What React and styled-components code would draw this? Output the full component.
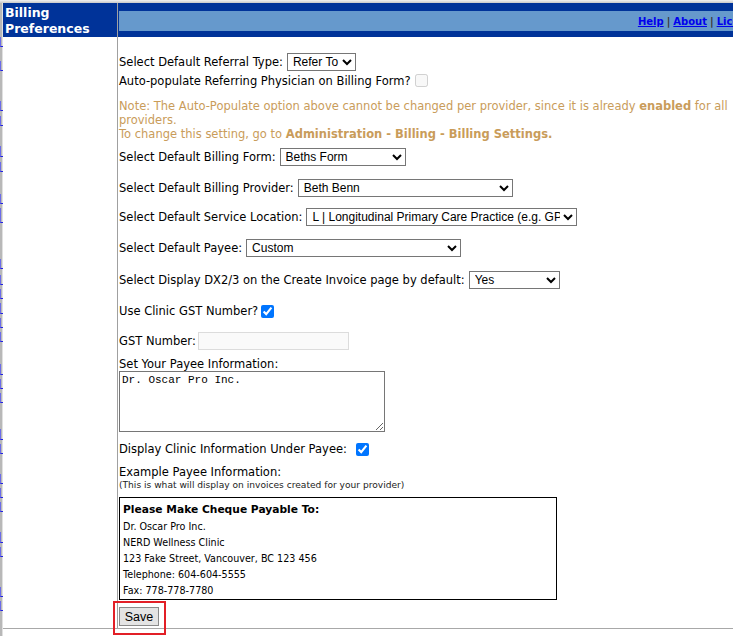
import React from 'react';
import styled, { createGlobalStyle } from 'styled-components';

const GlobalStyle = createGlobalStyle`
  html, body {
    margin: 0;
    padding: 0;
    overflow: hidden;
    background: #fff;
    font-family: "DejaVu Sans", Verdana, sans-serif;
    color: #000;
  }
`;

const Page = styled.div`
  width: 762px;
  height: 636px;
  display: flex;
  flex-direction: column;
`;

const TopEdge = styled.div`
  height: 3px;
  background: linear-gradient(#f2f2f2, #c8c8c8);
`;

const Body = styled.div`
  flex: 1;
  display: flex;
  align-items: flex-start;
`;

/* cut-off edge of the neighbouring menu frame */
const SideFrame = styled.div`
  flex-shrink: 0;
  width: 3px;
  height: 633px;
  overflow: hidden;
  background: linear-gradient(90deg, #b8b8b8 0 2px, #e0e0e0 2px);
  display: flex;
  flex-direction: column;
  align-items: flex-end;
  padding-top: 30px;
  box-sizing: border-box;
`;

const SideMark = styled.span`
  display: block;
  width: 2px;
  height: ${p => p.$h || 9}px;
  margin-top: ${p => p.$gap || 5}px;
  border-bottom: 1px solid #2323e0;
  border-left: 1px solid #6b6bea;
`;

const Frame = styled.div`
  flex: 1;
  min-width: 0;
  display: grid;
  grid-template-columns: 115px 1fr;
  border-bottom: 1px solid #a8a8a8;
`;

const TitleCell = styled.div`
  background: #003399;
  color: #fff;
  font-weight: bold;
  font-size: 12.5px;
  line-height: 16px;
  padding: 2px 0 0 2px;
  height: 34px;
  box-sizing: border-box;
  border-right: 1px solid #a0a0a0;
`;

const BarCell = styled.div`
  background: #003399;
  height: 34px;
  padding: 8px 0 6px 1px;
  box-sizing: border-box;
`;

const HelpBar = styled.div`
  background: #6699cc;
  height: 20px;
  display: flex;
  align-items: center;
  justify-content: flex-end;
  padding-right: 3px;
  font-size: 10px;
  font-weight: bold;
  white-space: nowrap;
`;

const HelpLink = styled.a`
  color: #0000ee;
  text-decoration: underline;
`;

const Pipe = styled.span`
  color: #333;
  margin: 0 3px;
`;

const SideCell = styled.div`
  border-right: 1px solid #a0a0a0;
`;

const Content = styled.div`
  padding: 15px 0 2px 1px;
  font-size: 11.5px;
  display: flex;
  flex-direction: column;
  align-items: flex-start;
  white-space: nowrap;
`;

const Field = styled.div`
  display: flex;
  align-items: center;
  height: ${p => p.$h || 20}px;
  margin-top: ${p => p.$mt || 0}px;
`;

const Select = styled.select`
  width: ${p => (p.$w ? `${p.$w}px` : 'auto')};
  height: 18px;
  margin-left: 4px;
  border: 1px solid #767676;
  border-radius: 0;
  background: #fff;
  font-family: "Liberation Sans", Arial, sans-serif;
  font-size: 12px;
  color: #000;
  padding: 0 0 0 1px;
  box-sizing: border-box;
`;

const Check = styled.input.attrs({ type: 'checkbox' })`
  width: 13px;
  height: 13px;
  margin: 0 0 0 ${p => p.$ml || 3}px;
`;

const Note = styled.div`
  margin-top: 9px;
  color: #c99c5a;
  line-height: 14px;
`;

const GstInput = styled.input`
  width: 151px;
  height: 18px;
  margin: 0 0 0 2px;
  border: 1px solid #dcdcdc;
  background: #fafafa;
  box-sizing: border-box;
`;

const Caption = styled.div`
  margin-top: ${p => p.$mt || 0}px;
  line-height: ${p => p.$lh || 14}px;
  font-size: ${p => p.$fs || 11.5}px;
  color: ${p => p.$color || '#000'};
`;

const PayeeArea = styled.textarea`
  width: 266px;
  height: 61px;
  margin: 0;
  display: block;
  box-sizing: border-box;
  border: 1px solid #767676;
  padding: 2px 2px;
  font-family: "Liberation Mono", "Courier New", monospace;
  font-size: 11px;
  line-height: 13px;
  resize: both;
`;

const ExampleBox = styled.div`
  margin-top: 6px;
  width: 438px;
  height: 103px;
  box-sizing: border-box;
  border: 1px solid #000;
  padding: 3px 3px 0 3px;
`;

const ExampleTitle = styled.div`
  font-weight: bold;
  font-size: 10.7px;
  line-height: 18px;
`;

const ExampleLine = styled.div`
  font-size: 9.6px;
  line-height: 16px;
`;

const SaveWrap = styled.div`
  position: relative;
  margin-top: 7px;
`;

const SaveButton = styled.button`
  display: block;
  width: 40px;
  height: 19px;
  padding: 0;
  border: 1px solid #8a8a8a;
  border-radius: 0;
  background: #e4e4e4;
  font-family: "Liberation Sans", Arial, sans-serif;
  font-size: 12.5px;
  color: #000;
`;

const Highlight = styled.div`
  position: absolute;
  top: -6px;
  left: -6px;
  right: -7px;
  bottom: -9px;
  border: 2px solid #e21f26;
  pointer-events: none;
`;

const sideMarks = [
  [9, 4], [9, 14], [9, 30], [9, 5], [10, 20], [9, 5], [9, 22], [14, 4], [9, 36], [9, 6],
  [9, 4], [10, 4], [9, 4], [9, 4], [10, 22], [9, 4], [9, 4], [10, 26],
  [9, 4], [9, 20], [9, 4], [9, 4], [10, 20], [9, 4], [9, 30], [9, 4],
];

const App = () => (
  <Page>
    <GlobalStyle />
    <TopEdge />
    <Body>
      <SideFrame>
        {sideMarks.map(([h, gap], i) => (
          <SideMark key={i} $h={h} $gap={gap} />
        ))}
      </SideFrame>
      <Frame>
        <TitleCell>Billing<br />Preferences</TitleCell>
        <BarCell>
          <HelpBar>
            <HelpLink>Help </HelpLink><Pipe>|</Pipe>
            <HelpLink>About </HelpLink><Pipe>|</Pipe>
            <HelpLink>License</HelpLink>
          </HelpBar>
        </BarCell>
        <SideCell />
        <Content>
          <Field $h={19}>
            Select Default Referral Type:
            <Select defaultValue="to">
              <option value="to">Refer To</option>
            </Select>
          </Field>
          <Field $h={19}>
            Auto-populate Referring Physician on Billing Form?
            <Check disabled $ml={4} />
          </Field>
          <Note>
            Note: The Auto-Populate option above cannot be changed per provider, since it is already <b>enabled</b> for all<br />
            providers.<br />
            To change this setting, go to <b>Administration - Billing - Billing Settings.</b>
          </Note>
          <Field $mt={6}>
            Select Default Billing Form:
            <Select $w={126} defaultValue="beth">
              <option value="beth">Beths Form</option>
            </Select>
          </Field>
          <Field $mt={11}>
            Select Default Billing Provider:
            <Select $w={215} defaultValue="benn">
              <option value="benn">Beth Benn</option>
            </Select>
          </Field>
          <Field $mt={9}>
            Select Default Service Location:
            <Select $w={271} defaultValue="l">
              <option value="l">L | Longitudinal Primary Care Practice (e.g. GP)</option>
            </Select>
          </Field>
          <Field $mt={11}>
            Select Default Payee:
            <Select $w={215} defaultValue="custom">
              <option value="custom">Custom</option>
            </Select>
          </Field>
          <Field $mt={12}>
            Select Display DX2/3 on the Create Invoice page by default:
            <Select $w={91} defaultValue="yes">
              <option value="yes">Yes</option>
              <option value="no">No</option>
            </Select>
          </Field>
          <Field $mt={11}>
            Use Clinic GST Number?
            <Check defaultChecked $ml={3} />
          </Field>
          <Field $mt={10}>
            GST Number:<GstInput disabled />
          </Field>
          <Caption $mt={6}>Set Your Payee Information:</Caption>
          <PayeeArea defaultValue="Dr. Oscar Pro Inc." />
          <Field $mt={7}>
            Display Clinic Information Under Payee:
            <Check defaultChecked $ml={9} />
          </Field>
          <Caption $mt={6}>Example Payee Information:</Caption>
          <Caption $lh={12} $fs={9.1} $color="#222">
            (This is what will display on invoices created for your provider)
          </Caption>
          <ExampleBox>
            <ExampleTitle>Please Make Cheque Payable To:</ExampleTitle>
            <ExampleLine>Dr. Oscar Pro Inc.</ExampleLine>
            <ExampleLine>NERD Wellness Clinic</ExampleLine>
            <ExampleLine>123 Fake Street, Vancouver, BC 123 456</ExampleLine>
            <ExampleLine>Telephone: 604-604-5555</ExampleLine>
            <ExampleLine>Fax: 778-778-7780</ExampleLine>
          </ExampleBox>
          <SaveWrap>
            <SaveButton>Save</SaveButton>
            <Highlight />
          </SaveWrap>
        </Content>
      </Frame>
    </Body>
  </Page>
);

export default App;
